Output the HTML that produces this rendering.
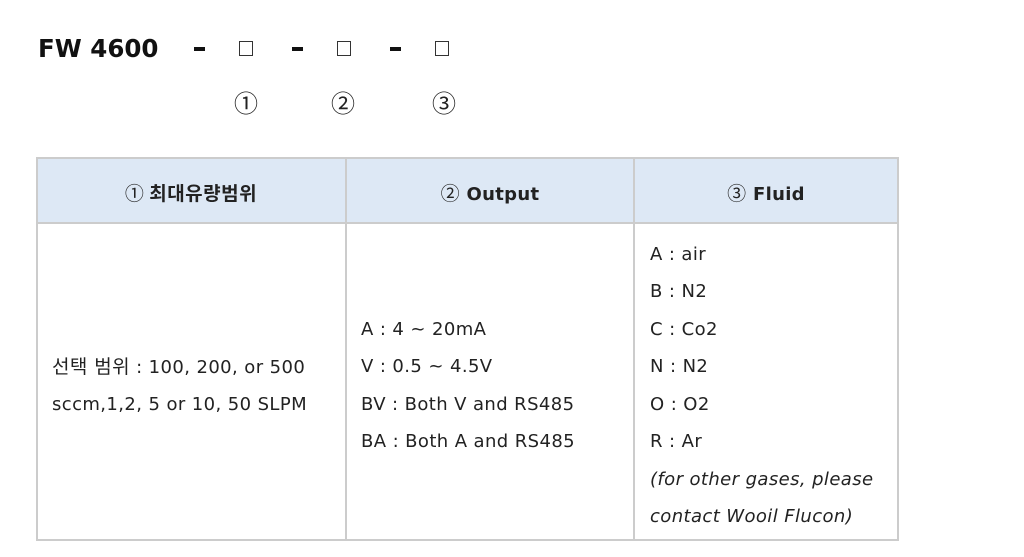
<!DOCTYPE html>
<html><head><meta charset="utf-8"><style>
body{margin:0;width:1024px;height:557px;background:#fff;position:relative;overflow:hidden;font-family:"DejaVu Sans","Noto Sans CJK KR",sans-serif;color:#222}
.a{position:absolute;white-space:nowrap}
.t{font-size:18px;line-height:20px;letter-spacing:0.4px;margin-top:2px}
.h{font-weight:bold;font-size:18px;line-height:24px;letter-spacing:0.3px}
.c{font-family:"Noto Sans CJK KR",sans-serif;font-weight:normal;font-size:19px}
.k{font-size:19px}
</style></head><body>
<div class="a" style="left:38px;top:34px;font-size:24.5px;font-weight:bold;color:#111">FW 4600</div>
<div class="a" style="left:194px;top:47px;width:11px;height:4px;background:#111"></div>
<div class="a" style="left:292px;top:47px;width:11px;height:4px;background:#111"></div>
<div class="a" style="left:390px;top:47px;width:11px;height:4px;background:#111"></div>
<div class="a" style="left:239px;top:41px;width:14px;height:15px;border:1px solid #333;box-sizing:border-box"></div>
<div class="a" style="left:337px;top:41px;width:14px;height:15px;border:1px solid #333;box-sizing:border-box"></div>
<div class="a" style="left:435px;top:41px;width:14px;height:15px;border:1px solid #333;box-sizing:border-box"></div>
<div class="a" style="left:234px;top:84px;font-size:24px;font-family:'Noto Sans CJK KR',sans-serif">①</div>
<div class="a" style="left:331px;top:84px;font-size:24px;font-family:'Noto Sans CJK KR',sans-serif">②</div>
<div class="a" style="left:432px;top:84px;font-size:24px;font-family:'Noto Sans CJK KR',sans-serif">③</div>

<div class="a" style="left:36px;top:157px;width:862px;height:66px;background:#dde8f5"></div>
<div class="a" style="left:36px;top:157px;width:863px;height:384px;border:2px solid #ccc;box-sizing:border-box"></div>
<div class="a" style="left:36px;top:222px;width:863px;height:2px;background:#ccc"></div>
<div class="a" style="left:345px;top:157px;width:2px;height:384px;background:#ccc"></div>
<div class="a" style="left:633px;top:157px;width:2px;height:384px;background:#ccc"></div>

<div class="a h" style="left:36px;width:310px;text-align:center;top:181px;font-family:'Noto Sans CJK KR',sans-serif;font-size:19px;letter-spacing:0.5px"><span class="c">①</span> 최대유량범위</div>
<div class="a h" style="left:346px;width:288px;text-align:center;top:181px"><span class="c">②</span> Output</div>
<div class="a h" style="left:634px;width:264px;text-align:center;top:181px"><span class="c">③</span> Fluid</div>

<div class="a t" style="left:52px;top:355px"><span class="k">선택 범위</span> : 100, 200, or 500</div>
<div class="a t" style="left:52px;top:393px">sccm,1,2, 5 or 10, 50 SLPM</div>

<div class="a t" style="left:361px;top:318px">A : 4 ~ 20mA</div>
<div class="a t" style="left:361px;top:355px">V : 0.5 ~ 4.5V</div>
<div class="a t" style="left:361px;top:393px">BV : Both V and RS485</div>
<div class="a t" style="left:361px;top:430px">BA : Both A and RS485</div>

<div class="a t" style="left:650px;top:243px">A : air</div>
<div class="a t" style="left:650px;top:280px">B : N2</div>
<div class="a t" style="left:650px;top:318px">C : Co2</div>
<div class="a t" style="left:650px;top:355px">N : N2</div>
<div class="a t" style="left:650px;top:393px">O : O2</div>
<div class="a t" style="left:650px;top:430px">R : Ar</div>
<div class="a t" style="left:650px;top:468px;font-style:italic">(for other gases, please</div>
<div class="a t" style="left:650px;top:505px;font-style:italic">contact Wooil Flucon)</div>
</body></html>
